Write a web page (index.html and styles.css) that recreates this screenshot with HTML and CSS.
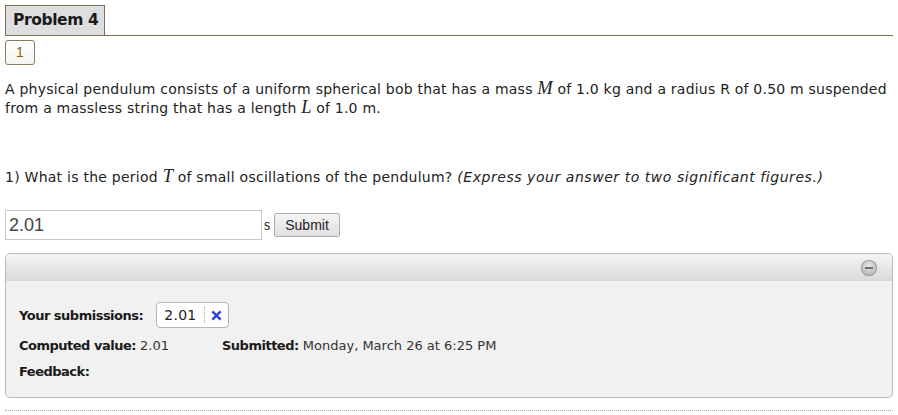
FILE: index.html
```html
<!DOCTYPE html>
<html>
<head>
<meta charset="utf-8">
<link rel="stylesheet" href="styles.css">
</head>
<body>
<div class="page">
  <div class="tabbar">
    <div class="tab">Problem 4</div>
  </div>
  <div class="parts">
    <div class="part">1</div>
  </div>
  <p class="stem">A physical pendulum consists of a uniform spherical bob that has a mass <span class="m">M</span> of 1.0 kg and a radius R of 0.50 m suspended<br>from a massless string that has a length <span class="m">L</span> of 1.0 m.</p>
  <p class="question">1) What is the period <span class="m">T</span> of small oscillations of the pendulum? <em>(Express your answer to two significant figures.)</em></p>
  <div class="answer">
    <input class="field" type="text" value="2.01">
    <span class="unit">s</span>
    <button class="submit">Submit</button>
  </div>
  <div class="panel">
    <div class="panel-head">
      <span class="collapse"></span>
    </div>
    <div class="panel-body">
      <div class="row first">
        <span class="lbl">Your submissions:</span>
        <span class="sub"><span class="subval">2.01</span><svg class="x" viewBox="0 0 12 12" width="11" height="11"><path d="M1.5 1.5 L10.5 10.5 M10.5 1.5 L1.5 10.5" stroke="#2f3fd4" stroke-width="2.6" stroke-linecap="butt" fill="none"/></svg></span>
      </div>
      <div class="row">
        <span class="computed"><span class="lbl">Computed value:</span> 2.01</span>
        <span class="val"><span class="lbl">Submitted:</span> Monday, March 26 at 6:25 PM</span>
      </div>
      <div class="row">
        <span class="lbl">Feedback:</span>
      </div>
    </div>
  </div>
  <div class="dotted"></div>
</div>
</body>
</html>
```
FILE: styles.css
```css
html, body {
  margin: 0;
  padding: 0;
  background: #fff;
}
.page {
  padding: 5px 5px 0 5px;
  font-family: "DejaVu Sans", sans-serif;
  font-size: 13px;
  color: #222;
}
.tabbar {
  display: flex;
  border-bottom: 1px solid #7d6e58;
}
.tab {
  background: #dedede;
  border: 1px solid #7d6e58;
  border-bottom: none;
  padding: 4px 6px 4px 7px;
  font-weight: bold;
  font-size: 15.5px;
  letter-spacing: -0.4px;
  line-height: 21px;
  color: #1a1a1a;
}
.parts {
  display: flex;
  margin-top: 4px;
}
.part {
  width: 28px;
  height: 23px;
  border: 1px solid #8a7a60;
  border-radius: 3px;
  text-align: center;
  line-height: 23px;
  color: #8a5a18;
  font-family: "Liberation Sans", sans-serif;
  font-size: 14px;
  background: linear-gradient(#fff, #f6f4f0);
}
.stem {
  margin: 15px 0 0 0;
  font-size: 14px;
  letter-spacing: 0.22px;
  line-height: 19px;
}
.m {
  display: inline-block;
  font-family: "Liberation Serif", serif;
  font-style: italic;
  font-size: 18.5px;
  line-height: 15px;
  height: 15px;
  letter-spacing: 0;
  vertical-align: baseline;
}
.question {
  margin: 50px 0 0 0;
  font-size: 14px;
  letter-spacing: 0.25px;
  line-height: 19px;
}
.question em {
  font-style: italic;
  letter-spacing: 0.55px;
}
.answer {
  display: flex;
  align-items: center;
  margin-top: 23px;
}
.field {
  width: 249px;
  height: 28px;
  box-sizing: content-box;
  margin: 0;
  padding: 0 3px;
  border: 1px solid #c8c8c8;
  font-family: "Liberation Sans", sans-serif;
  font-size: 18px;
  color: #444;
}
.unit {
  font-family: "Liberation Serif", serif;
  font-size: 16px;
  margin: 0 4px 0 2px;
  color: #222;
}
.submit {
  margin: 0;
  height: 24px;
  padding: 0 10px;
  border: 1px solid #adadad;
  border-radius: 2px;
  background: linear-gradient(#f4f4f4, #e0e0e0);
  font-family: "Liberation Sans", sans-serif;
  font-size: 14px;
  color: #222;
}
.panel {
  margin-top: 13px;
  border: 1px solid #b8b8b8;
  border-radius: 5px;
  overflow: hidden;
  background: #f1f1f1;
}
.panel-head {
  height: 27px;
  background: linear-gradient(#f5f5f5, #d9d9d9);
  display: flex;
  justify-content: flex-end;
  align-items: center;
  padding-right: 15px;
}
.collapse {
  position: relative;
  width: 16px;
  height: 16px;
  border-radius: 50%;
  background: radial-gradient(circle at 50% 35%, #e6e6e6, #a8a8a8);
  box-shadow: inset 0 0 0 1px #9d9d9d;
}
.collapse::after {
  content: "";
  position: absolute;
  left: 4px;
  top: 7px;
  width: 8px;
  height: 2px;
  background: #6e6e6e;
}
.panel-body {
  padding: 21px 13px 13px 13px;
}
.row {
  display: flex;
  align-items: center;
  min-height: 26px;
}
.row.first {
  margin-bottom: 4px;
}
.lbl {
  font-weight: bold;
  letter-spacing: -0.5px;
  color: #1a1a1a;
}
.row .lbl + .sub {
  margin-left: 13px;
}
.sub {
  display: inline-flex;
  align-items: center;
  height: 24px;
  border: 1px solid #b5b5b5;
  border-radius: 4px;
  background: #fff;
  padding: 0 6px 0 7px;
}
.subval {
  padding-right: 7px;
  border-right: 1px dotted #aaa;
  line-height: 16px;
  font-size: 14px;
  letter-spacing: 0.3px;
  color: #222;
}
.x {
  display: block;
  margin-left: 6px;
}
.computed {
  width: 203px;
  color: #333;
}
.val {
  color: #333;
}
.dotted {
  margin-top: 12px;
  border-top: 1px dotted #aaa;
}
```
